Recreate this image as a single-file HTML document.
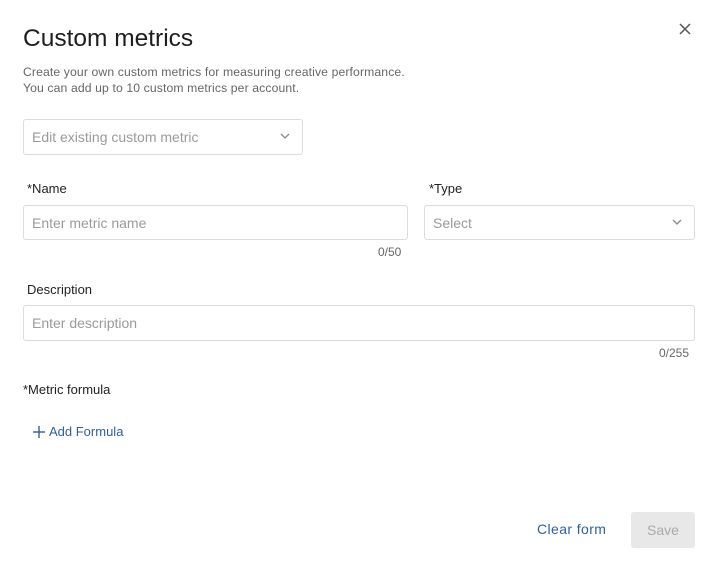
<!DOCTYPE html>
<html><head><style>
body{margin:0;width:716px;height:563px;background:#fff;font-family:"Liberation Sans",sans-serif;position:relative;overflow:hidden;color:#222}
.a{position:absolute}
.box{position:absolute;border:1px solid #dcdcdc;border-radius:3px;box-sizing:border-box;font-size:14px;color:#9a9a9a;padding-left:8px;display:flex;align-items:center}
.lbl{position:absolute;font-size:13px;color:#222}
.cnt{position:absolute;font-size:12px;color:#666}
.chev{position:absolute;right:12px;top:50%;margin-top:-5px}
</style></head><body>
<div class="a" style="left:23px;top:25px;font-size:24.5px;color:#1e1e1e">Custom metrics</div>
<svg class="a" style="left:679px;top:23px" width="12" height="12"><path d="M1 1L11 11M11 1L1 11" stroke="#555" stroke-width="1.5"/></svg>
<div class="a" style="left:23px;top:64px;font-size:12.2px;letter-spacing:0.12px;line-height:16px;color:#666">Create your own custom metrics for measuring creative performance.<br>You can add up to 10 custom metrics per account.</div>
<div class="box" style="left:23px;top:119px;width:280px;height:36px">Edit existing custom metric<svg class="chev" width="10" height="8"><path d="M1 2L5 6L9 2" stroke="#888" fill="none" stroke-width="1.3"/></svg></div>
<div class="lbl" style="left:27px;top:181px">*Name</div>
<div class="lbl" style="left:429px;top:181px">*Type</div>
<div class="box" style="left:23px;top:205px;width:385px;height:35px">Enter metric name</div>
<div class="box" style="left:424px;top:205px;width:271px;height:35px">Select<svg class="chev" width="10" height="8"><path d="M1 2L5 6L9 2" stroke="#888" fill="none" stroke-width="1.3"/></svg></div>
<div class="cnt" style="left:378px;top:245px">0/50</div>
<div class="lbl" style="left:27px;top:282px">Description</div>
<div class="box" style="left:23px;top:305px;width:672px;height:36px">Enter description</div>
<div class="cnt" style="left:659px;top:346px">0/255</div>
<div class="lbl" style="left:23px;top:382px">*Metric formula</div>
<svg class="a" style="left:32px;top:425px" width="14" height="14"><path d="M7 1V13M1 7H13" stroke="#3a68a8" stroke-width="1.5"/></svg>
<div class="a" style="left:49px;top:424px;font-size:13px;color:#2f5f9e">Add Formula</div>
<div class="a" style="left:537px;top:521px;font-size:14px;letter-spacing:0.4px;color:#2f5f9e">Clear form</div>
<div class="a" style="left:631px;top:512px;width:64px;height:36px;background:#e8e8e8;border-radius:3px;color:#aaa;font-size:14px;display:flex;align-items:center;justify-content:center">Save</div>
</body></html>
